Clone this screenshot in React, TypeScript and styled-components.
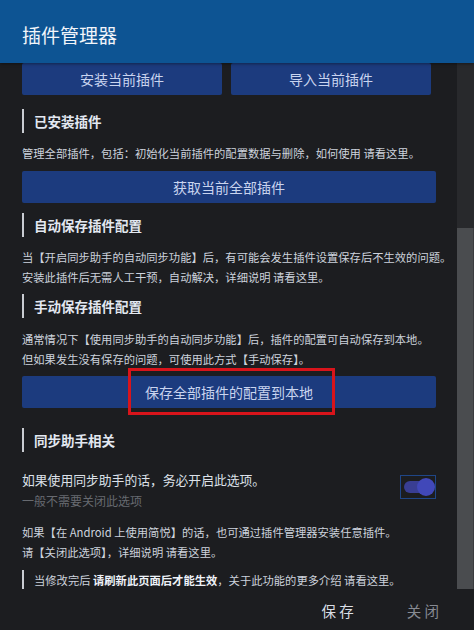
import styled, { createGlobalStyle } from 'styled-components';

const GlobalStyle = createGlobalStyle`
  html, body {
    margin: 0;
    padding: 0;
    background: #1c1d20;
  }
  body {
    font-family: 'Noto Sans CJK SC', 'Noto Sans', sans-serif;
  }
`;

export default function App() {
  return (
    <>
      <GlobalStyle />
      <Dialog>
        <Header>
          <HeaderTitle>插件管理器</HeaderTitle>
        </Header>
        <Body>
          <Content>
            <ButtonRow>
              <ActionButton>安装当前插件</ActionButton>
              <ActionButton>导入当前插件</ActionButton>
            </ButtonRow>

            <SectionTitle $gap={14}>已安装插件</SectionTitle>
            <Desc $gap={10}>管理全部插件，包括：初始化当前插件的配置数据与删除，如何使用 请看这里。</Desc>
            <WideButton $gap={8}>获取当前全部插件</WideButton>

            <SectionTitle $gap={10}>自动保存插件配置</SectionTitle>
            <Desc $gap={10}>
              当【开启同步助手的自动同步功能】后，有可能会发生插件设置保存后不生效的问题。
              <br />
              安装此插件后无需人工干预，自动解决，详细说明 请看这里。
            </Desc>

            <SectionTitle $gap={7}>手动保存插件配置</SectionTitle>
            <Desc $gap={11}>
              通常情况下【使用同步助手的自动同步功能】后，插件的配置可自动保存到本地。
              <br />
              但如果发生没有保存的问题，可使用此方式【手动保存】。
            </Desc>
            <HighlightWrap $gap={7}>
              <WideButton $gap={0}>保存全部插件的配置到本地</WideButton>
              <Highlight />
            </HighlightWrap>

            <SectionTitle $gap={20}>同步助手相关</SectionTitle>
            <OptionRow>
              <OptionText>
                <OptionLabel>如果使用同步助手的话，务必开启此选项。</OptionLabel>
                <OptionHint>一般不需要关闭此选项</OptionHint>
              </OptionText>
              <Toggle>
                <ToggleTrack />
                <ToggleKnob />
              </Toggle>
            </OptionRow>
            <Desc $gap={11}>
              如果【在 Android 上使用简悦】的话，也可通过插件管理器安装任意插件。
              <br />
              请【关闭此选项】，详细说明 请看这里。
            </Desc>
            <Note>
              当修改完后 <strong>请刷新此页面后才能生效</strong>，关于此功能的更多介绍 请看这里。
            </Note>
          </Content>
          <ScrollTrack>
            <ScrollThumb />
          </ScrollTrack>
        </Body>
        <Footer>
          <FooterButton $primary>保 存</FooterButton>
          <FooterButton>关 闭</FooterButton>
        </Footer>
      </Dialog>
    </>
  );
}

const Dialog = styled.div`
  width: 474px;
  height: 630px;
  display: flex;
  flex-direction: column;
  background: #1c1d20;
  overflow: hidden;
`;

const Header = styled.header`
  height: 63px;
  flex-shrink: 0;
  display: flex;
  align-items: center;
  padding: 6px 22px 0;
  box-sizing: border-box;
  background: #0d5493;
  position: relative;
  z-index: 1;
  box-shadow: 0 1px 3px rgba(0, 0, 0, 0.4);
`;

const HeaderTitle = styled.h1`
  margin: 0;
  font-size: 19px;
  font-weight: 400;
  color: #f2f5fa;
`;

const Body = styled.div`
  height: 526px;
  flex-shrink: 0;
  display: flex;
`;

const Content = styled.div`
  flex: 1;
  display: flex;
  flex-direction: column;
  padding: 0 21px 0 22px;
  overflow: hidden;
`;

const ButtonRow = styled.div`
  display: grid;
  grid-template-columns: 200px 200px;
  column-gap: 9px;
  flex-shrink: 0;
`;

const ActionButton = styled.button`
  height: 32px;
  border: none;
  border-radius: 2px;
  background: #1c3b7e;
  color: #c9d4ef;
  font-family: inherit;
  font-size: 14px;
  padding: 0;
`;

const WideButton = styled(ActionButton)`
  width: 100%;
  margin-top: ${({ $gap }) => $gap}px;
  flex-shrink: 0;
`;

const SectionTitle = styled.h3`
  margin: ${({ $gap }) => $gap}px 0 0;
  height: 24px;
  flex-shrink: 0;
  display: flex;
  align-items: center;
  border-left: 2px solid #c9ccd2;
  padding-left: 10px;
  font-size: 13.5px;
  font-weight: 700;
  color: #e3e8f1;
`;

const Desc = styled.p`
  margin: ${({ $gap }) => $gap}px 0 0;
  flex-shrink: 0;
  font-size: 11.3px;
  line-height: 20px;
  color: #cdd3dd;
  white-space: nowrap;
`;

const HighlightWrap = styled.div`
  position: relative;
  margin-top: ${({ $gap }) => $gap}px;
  flex-shrink: 0;
`;

const Highlight = styled.div`
  position: absolute;
  left: 106px;
  top: -8px;
  width: 207px;
  height: 47px;
  border: 3px solid #d8141b;
  box-sizing: border-box;
  pointer-events: none;
`;

const OptionRow = styled.div`
  margin-top: 18px;
  flex-shrink: 0;
  display: flex;
  align-items: center;
  justify-content: space-between;
`;

const OptionText = styled.div`
  display: flex;
  flex-direction: column;
`;

const OptionLabel = styled.span`
  font-size: 12.8px;
  line-height: 20px;
  color: #dce1e9;
`;

const OptionHint = styled.span`
  font-size: 12px;
  line-height: 21px;
  color: #676a70;
`;

const Toggle = styled.div`
  position: relative;
  width: 36px;
  height: 24px;
  margin-top: -8px;
  box-sizing: border-box;
  border: 1px solid #1f4687;
  flex-shrink: 0;
`;

const ToggleTrack = styled.div`
  position: absolute;
  left: 3px;
  top: 5px;
  width: 28px;
  height: 12px;
  border-radius: 6px;
  background: #393e93;
`;

const ToggleKnob = styled.div`
  position: absolute;
  left: 16px;
  top: 2px;
  width: 18px;
  height: 18px;
  border-radius: 50%;
  background: #4148b9;
`;

const Note = styled.p`
  margin: 8px 0 0;
  flex-shrink: 0;
  border-left: 2px solid #c9ccd2;
  padding-left: 10px;
  font-size: 11.3px;
  line-height: 20px;
  color: #cdd3dd;
  white-space: nowrap;

  strong {
    color: #eef2f8;
    font-weight: 700;
  }
`;

const ScrollTrack = styled.div`
  width: 17px;
  flex-shrink: 0;
  display: flex;
  flex-direction: column;
  background: #28292c;
`;

const ScrollThumb = styled.div`
  margin-top: 165px;
  flex: 1;
  background: #4a4c4f;
  border-right: 1px solid #3a3b3e;
`;

const Footer = styled.footer`
  flex: 1;
  display: flex;
  align-items: center;
  justify-content: flex-end;
  column-gap: 53px;
  padding: 2px 35px 0 0;
`;

const FooterButton = styled.button`
  border: none;
  background: none;
  padding: 0;
  font-family: inherit;
  font-size: 14.5px;
  color: ${({ $primary }) => ($primary ? '#d9dde5' : '#878b93')};
`;
